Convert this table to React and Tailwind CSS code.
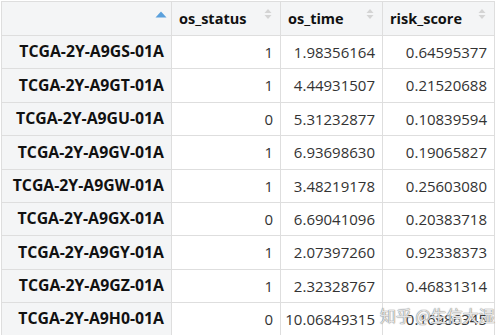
const rows = [
  ["TCGA-2Y-A9GS-01A", "1", "1.98356164", "0.64595377"],
  ["TCGA-2Y-A9GT-01A", "1", "4.44931507", "0.21520688"],
  ["TCGA-2Y-A9GU-01A", "0", "5.31232877", "0.10839594"],
  ["TCGA-2Y-A9GV-01A", "1", "6.93698630", "0.19065827"],
  ["TCGA-2Y-A9GW-01A", "1", "3.48219178", "0.25603080"],
  ["TCGA-2Y-A9GX-01A", "0", "6.69041096", "0.20383718"],
  ["TCGA-2Y-A9GY-01A", "1", "2.07397260", "0.92338373"],
  ["TCGA-2Y-A9GZ-01A", "1", "2.32328767", "0.46831314"],
  ["TCGA-2Y-A9H0-01A", "0", "10.06849315", "0.16986345"],
];

const SortBoth = () => (
  <svg width="8" height="12" viewBox="0 0 8 12" className="absolute right-[8px] top-[6px]">
    <path d="M4 1 L7.5 5 L0.5 5 Z" fill="#d4d4d4" />
    <path d="M4 11 L7.5 7 L0.5 7 Z" fill="#d4d4d4" />
  </svg>
);

const SortUp = () => (
  <svg width="12" height="8" viewBox="0 0 12 8" className="absolute right-[4px] top-[9px]">
    <path d="M6 0.5 L11.5 6.5 L0.5 6.5 Z" fill="#5aa0dc" />
  </svg>
);

export default function App() {
  return (
    <div
      className="relative w-[496px] h-[335px] overflow-hidden bg-white"
      style={{ fontFamily: '"Open Sans", "Noto Sans", sans-serif' }}
    >
      <table className="ml-[1px] mt-[1px] border-collapse table-fixed w-[493px] text-[15px]">
        <colgroup>
          <col className="w-[170px]" />
          <col className="w-[109px]" />
          <col className="w-[102px]" />
          <col className="w-[112px]" />
        </colgroup>
        <thead>
          <tr className="h-[34px] bg-[#f4f5f6]">
            <th className="relative border border-[#dedede]">
              <SortUp />
            </th>
            {["os_status", "os_time", "risk_score"].map((h) => (
              <th
                key={h}
                className="relative border border-[#dedede] text-left pl-[7px] text-[14.5px] font-bold text-[#111]"
              >
                {h}
                <SortBoth />
              </th>
            ))}
          </tr>
        </thead>
        <tbody>
          {rows.map((r) => (
            <tr key={r[0]} className="h-[33.4px]">
              <td className="border border-[#dedede] bg-[#f4f5f6] text-right pr-[7px] text-[15.8px] font-bold text-[#111] whitespace-nowrap">
                {r[0]}
              </td>
              {r.slice(1).map((v, i) => (
                <td
                  key={i}
                  className="border border-[#dedede] text-right pr-[7px] text-[#333]"
                >
                  {v}
                </td>
              ))}
            </tr>
          ))}
        </tbody>
      </table>
      <div
        className="absolute left-[380px] top-[303px] text-[16px] whitespace-nowrap text-white/80"
        style={{
          fontFamily: '"Noto Sans CJK SC", sans-serif',
          textShadow: "0 0 1px #777, 0 0 1px #777",
        }}
      >
        知乎 @生信大湿
      </div>
    </div>
  );
}
